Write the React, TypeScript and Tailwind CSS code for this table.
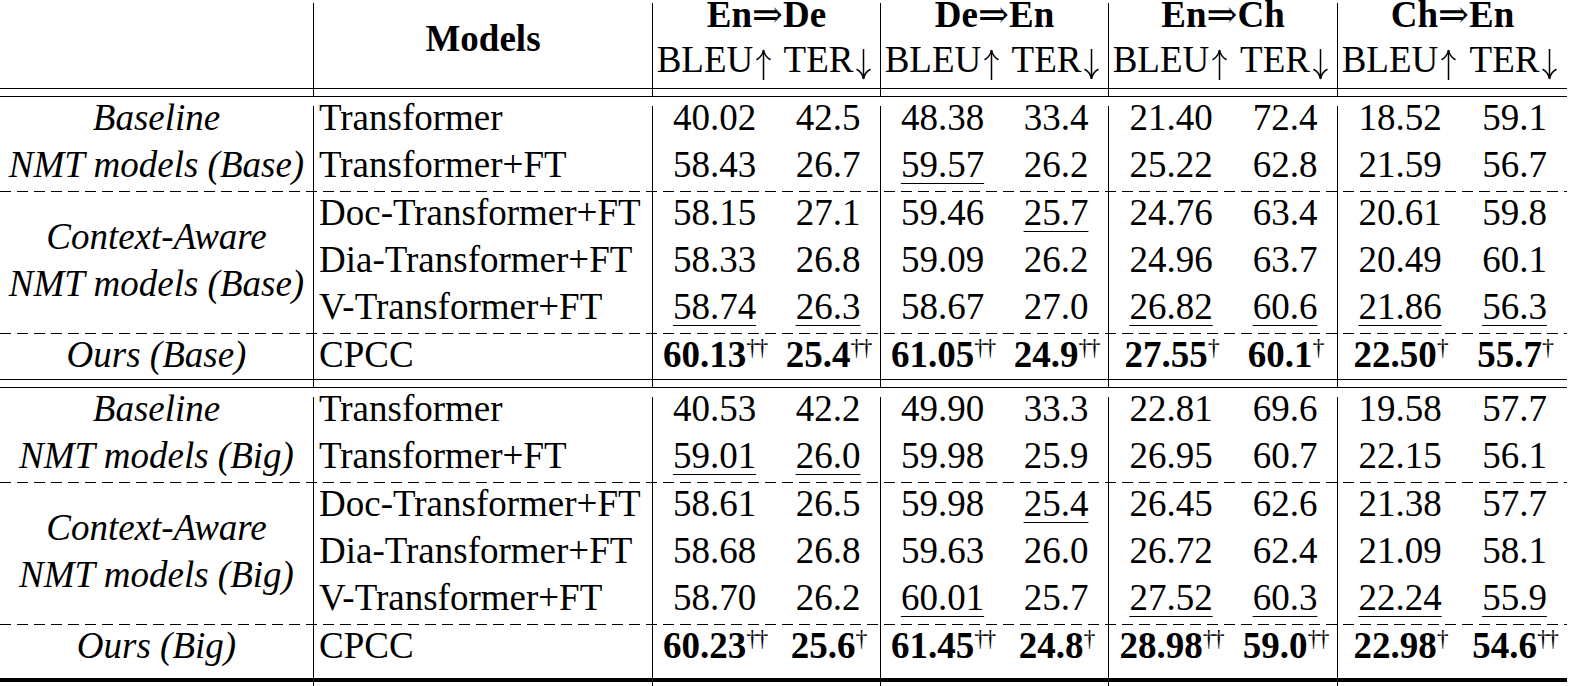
import React from 'react';

const GRID =
  'grid grid-cols-[313px_339px_124px_104px_124px_104px_125px_104px_125px_105px]';

// vertical rules sit on the left edge of these columns
const HAS_LINE = [false, true, true, false, true, false, true, false, true, false];

type BlockData = {
  size: string;
  rows: { model: string; vals: string[] }[];
  ours: string[];
};

// "_" = underlined, "*" = bold, trailing † = superscript
const base: BlockData = {
  size: 'Base',
  rows: [
    { model: 'Transformer', vals: ['40.02', '42.5', '48.38', '33.4', '21.40', '72.4', '18.52', '59.1'] },
    { model: 'Transformer+FT', vals: ['58.43', '26.7', '_59.57', '26.2', '25.22', '62.8', '21.59', '56.7'] },
    { model: 'Doc-Transformer+FT', vals: ['58.15', '27.1', '59.46', '_25.7', '24.76', '63.4', '20.61', '59.8'] },
    { model: 'Dia-Transformer+FT', vals: ['58.33', '26.8', '59.09', '26.2', '24.96', '63.7', '20.49', '60.1'] },
    { model: 'V-Transformer+FT', vals: ['_58.74', '_26.3', '58.67', '27.0', '_26.82', '_60.6', '_21.86', '_56.3'] },
  ],
  ours: ['*60.13††', '*25.4††', '*61.05††', '*24.9††', '*27.55†', '*60.1†', '*22.50†', '*55.7†'],
};

const big: BlockData = {
  size: 'Big',
  rows: [
    { model: 'Transformer', vals: ['40.53', '42.2', '49.90', '33.3', '22.81', '69.6', '19.58', '57.7'] },
    { model: 'Transformer+FT', vals: ['_59.01', '_26.0', '59.98', '25.9', '26.95', '60.7', '22.15', '56.1'] },
    { model: 'Doc-Transformer+FT', vals: ['58.61', '26.5', '59.98', '_25.4', '26.45', '62.6', '21.38', '57.7'] },
    { model: 'Dia-Transformer+FT', vals: ['58.68', '26.8', '59.63', '26.0', '26.72', '62.4', '21.09', '58.1'] },
    { model: 'V-Transformer+FT', vals: ['58.70', '26.2', '_60.01', '25.7', '_27.52', '_60.3', '_22.24', '_55.9'] },
  ],
  ours: ['*60.23††', '*25.6†', '*61.45††', '*24.8†', '*28.98††', '*59.0††', '*22.98†', '*54.6††'],
};

// thin math-style arrows, like \uparrow / \downarrow
function Arrow({ down }: { down?: boolean }) {
  return (
    <svg
      width="17"
      height="31"
      viewBox="0 0 17 31"
      className={`inline-block align-[-8px] ml-[2px] ${down ? 'rotate-180' : ''}`}
      fill="none"
      stroke="currentColor"
      strokeWidth="1.5"
      strokeLinecap="round"
    >
      <path d="M8.5 1.5V31" />
      <path d="M2 10.5C5.5 8.5 7.6 5.5 8.5 1.2C9.4 5.5 11.5 8.5 15 10.5" />
    </svg>
  );
}

function Num({ s }: { s: string }) {
  let t = s;
  let bold = false;
  let under = false;
  if (t.startsWith('*')) {
    bold = true;
    t = t.slice(1);
  }
  if (t.startsWith('_')) {
    under = true;
    t = t.slice(1);
  }
  const m = t.match(/^([^†]*)(†*)$/);
  const num = m ? m[1] : t;
  const dag = m ? m[2] : '';
  return (
    <span className="whitespace-nowrap">
      <span
        className={`${bold ? 'font-bold' : ''} ${under ? 'underline decoration-1 underline-offset-[6px]' : ''}`}
      >
        {num}
      </span>
      {dag && <sup className="text-[24px] tracking-[-2px]">{dag}</sup>}
    </span>
  );
}

function LineRow({ h, dashed }: { h: string; dashed?: boolean }) {
  return (
    <div
      className={`${GRID} ${h} ${dashed ? 'bg-[repeating-linear-gradient(90deg,#000_0_11px,transparent_11px_17px)]' : ''}`}
    >
      {HAS_LINE.map((l, i) => (
        <div key={i} className={l ? 'border-l border-black' : ''} />
      ))}
    </div>
  );
}

function DataCells({ model, vals }: { model: string; vals: string[] }) {
  return (
    <>
      <div className="border-l border-black pl-[5px] whitespace-nowrap">{model}</div>
      {vals.map((v, i) => (
        <div key={i} className={`text-center ${i % 2 === 0 ? 'border-l border-black' : ''}`}>
          <Num s={v} />
        </div>
      ))}
    </>
  );
}

function Block({ data, oursH }: { data: BlockData; oursH: string }) {
  const [r1, r2, r3, r4, r5] = data.rows;
  return (
    <div>
      <div className="h-[9px]" />
      <div className={`${GRID} h-[38px] leading-[23px]`}>
        <div className="italic text-center">Baseline</div>
        <DataCells {...r1} />
      </div>
      <div className={`${GRID} h-[47px] leading-[41px]`}>
        <div className="italic text-center whitespace-nowrap">NMT models ({data.size})</div>
        <DataCells {...r2} />
      </div>
      <LineRow h="h-px" dashed />
      <div className={`${GRID} grid-rows-[47px_47px_47px] leading-[41px]`}>
        <div className="row-span-3 flex flex-col justify-center italic text-center whitespace-nowrap">
          <div className="h-[47px]">Context-Aware</div>
          <div className="h-[47px]">NMT models ({data.size})</div>
        </div>
        <DataCells {...r3} />
        <DataCells {...r4} />
        <DataCells {...r5} />
      </div>
      <LineRow h="h-px" dashed />
      <div className={`${GRID} ${oursH} leading-[41px]`}>
        <div className="italic text-center">Ours ({data.size})</div>
        <DataCells model="CPCC" vals={data.ours} />
      </div>
    </div>
  );
}

function Header() {
  const groups = [
    ['En', 'De'],
    ['De', 'En'],
    ['En', 'Ch'],
    ['Ch', 'En'],
  ];
  return (
    <div className={`${GRID} h-[85px]`}>
      <div />
      <div className="border-l border-black pt-[17px] leading-none text-center font-bold">Models</div>
      {groups.map(([a, b]) => (
        <div key={a + b} className="col-span-2 border-l border-black">
          <div className="text-center font-bold leading-[23px] whitespace-nowrap">
            {a}
            <span className="font-normal">⇒</span>
            {b}
          </div>
          <div className="mt-[15px] grid grid-cols-[123px_1fr] leading-none">
            <div className="text-center whitespace-nowrap">
              BLEU
              <Arrow />
            </div>
            <div className="text-center whitespace-nowrap">
              TER
              <Arrow down />
            </div>
          </div>
        </div>
      ))}
    </div>
  );
}

function DoubleRule() {
  return (
    <>
      <div className="h-px bg-black" />
      <LineRow h="h-[7px]" />
      <div className="h-px bg-black" />
    </>
  );
}

export default function App() {
  return (
    <div className="w-[1571px] h-[686px] overflow-hidden bg-white text-black font-['Liberation_Serif','DejaVu_Serif',serif] text-[37px]">
      <div className="w-[1567px]">
        <div className="h-[3px]" />
        <Header />
        <DoubleRule />
        <Block data={base} oursH="h-[45px]" />
        <DoubleRule />
        <Block data={big} oursH="h-[47px]" />
        <LineRow h="h-[6px]" />
        <div className="h-[4px] bg-black" />
        <LineRow h="h-[4px]" />
      </div>
    </div>
  );
}
